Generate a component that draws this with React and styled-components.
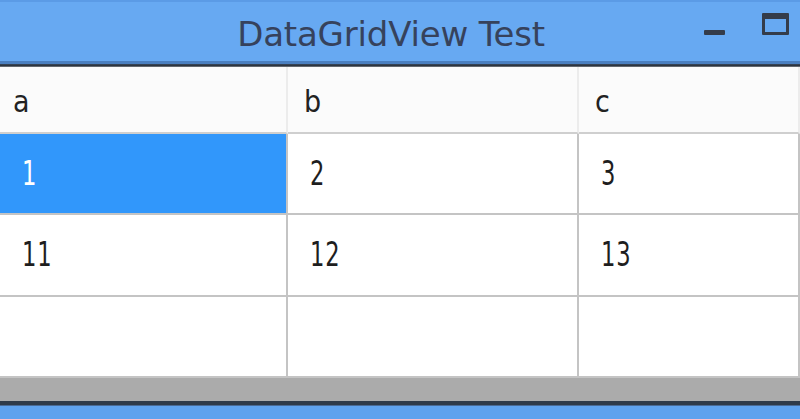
import React from "react";
import styled, { createGlobalStyle } from "styled-components";

const Global = createGlobalStyle`
  html, body { margin: 0; padding: 0; background: #ffffff; }
  body { width: 800px; height: 419px; overflow: hidden; }
  * { box-sizing: border-box; }
`;

const Window = styled.div`
  width: 800px;
  height: 419px;
  display: flex;
  flex-direction: column;
  overflow: hidden;
  background: #ffffff;
`;

const TitleBar = styled.div`
  height: 64px;
  flex: none;
  display: flex;
  align-items: center;
  position: relative;
  background: #67a9f2;
  border-top: 2px solid #5b9be6;
  box-shadow: inset 0 -3px 0 #4a7fc0;
`;

const TitleShade = styled.div`
  height: 3px;
  flex: none;
  background: linear-gradient(#3a4a60, #2a3038 60%, #8c9096);
`;

const Title = styled.div`
  flex: 1;
  text-align: center;
  padding-right: 18px;
  font-family: "DejaVu Sans", Verdana, sans-serif;
  font-size: 34px;
  color: #36425c;
  letter-spacing: -0.2px;
  line-height: 1;
  margin-top: 1px;
`;

const Buttons = styled.div`
  position: absolute;
  right: 11px;
  top: 11px;
  display: flex;
  align-items: flex-start;
  gap: 37px;
`;

const MinBtn = styled.div`
  width: 21px;
  height: 5px;
  margin-top: 17px;
  background: #343c4a;
  border-radius: 1px;
`;

const MaxBtn = styled.div`
  width: 27px;
  height: 22px;
  border: 3px solid #343c4a;
  border-top-width: 6px;
  border-radius: 1px;
`;

const Grid = styled.div`
  flex: none;
  display: grid;
  grid-template-columns: 288px 291px 1fr;
  grid-template-rows: 67px 81px 82px 81px;
`;

const HeaderCell = styled.div`
  background: #fbfbfb;
  border-right: 2px solid #ececec;
  border-bottom: 2px solid #cfcfcf;
  display: flex;
  align-items: center;
  padding-left: ${(p) => p.$pad || 14}px;
  padding-top: 4px;
  font-family: "DejaVu Sans Condensed", "DejaVu Sans", sans-serif;
  font-size: 30px;
  color: #222222;
`;

const Cell = styled.div`
  background: ${(p) => (p.$selected ? "#3197fb" : "#ffffff")};
  color: ${(p) => (p.$selected ? "#ffffff" : "#1e1e1e")};
  border-right: 2px solid #c4c4c4;
  border-bottom: 2px solid #c4c4c4;
  display: flex;
  align-items: center;
  padding-left: 22px;
  padding-bottom: 2px;
  font-family: "DejaVu Sans Condensed", "DejaVu Sans", sans-serif;
  font-size: 34px;
  font-weight: 300;
`;

const Narrow = styled.span`
  display: inline-block;
  letter-spacing: 1px;
  transform: scaleX(0.74);
  transform-origin: left center;
`;

const Filler = styled.div`
  flex: 1;
  background: #ababab;
  display: flex;
  flex-direction: column;
  justify-content: flex-end;
`;

const BottomEdge = styled.div`
  height: 18px;
  background: #5fa2ee;
  border-top: 4px solid #2f3a48;
  box-shadow: inset 0 1px 0 #4a6a94;
`;

const headers = ["a", "b", "c"];
const rows = [
  ["1", "2", "3"],
  ["11", "12", "13"],
  ["", "", ""],
];

export default function App() {
  return (
    <>
      <Global />
      <Window>
        <TitleBar>
          <Title>DataGridView Test</Title>
          <Buttons>
            <MinBtn />
            <MaxBtn />
          </Buttons>
        </TitleBar>
        <TitleShade />
        <Grid>
          {headers.map((h, i) => (
            <HeaderCell key={h} $pad={i === 0 ? 13 : 16}>
              {h}
            </HeaderCell>
          ))}
          {rows.map((r, ri) =>
            r.map((v, ci) => (
              <Cell key={`${ri}-${ci}`} $selected={ri === 0 && ci === 0}>
                <Narrow>{v}</Narrow>
              </Cell>
            ))
          )}
        </Grid>
        <Filler>
          <BottomEdge />
        </Filler>
      </Window>
    </>
  );
}
